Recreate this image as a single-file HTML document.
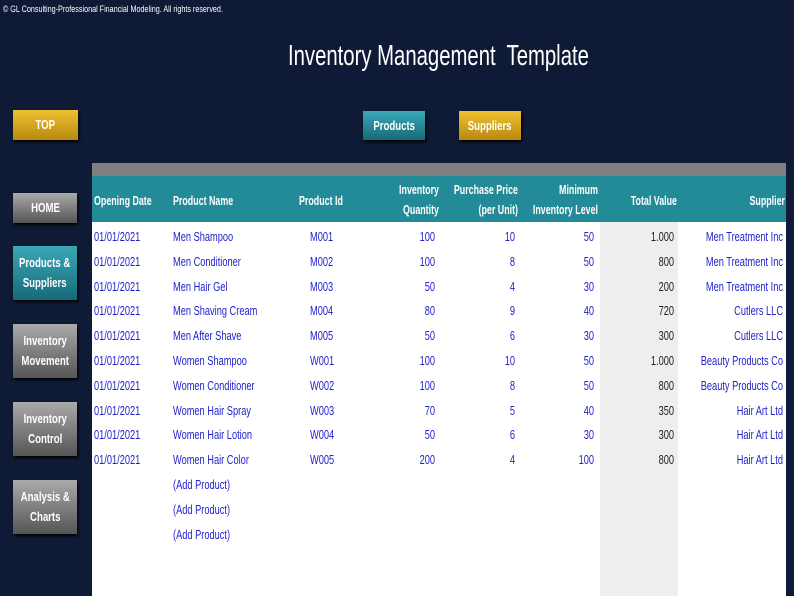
<!DOCTYPE html><html><head><style>
body{margin:0;width:794px;height:596px;overflow:hidden;background:#0f1b36;font-family:"Liberation Sans",sans-serif;position:relative}
.a{position:absolute}
.btn{position:absolute;color:#fff;font-size:13px;font-weight:bold;display:flex;align-items:center;justify-content:center;text-align:center;line-height:20px;box-shadow:1px 2px 3px #000}
.btn span{display:inline-block;transform:scaleX(.74);white-space:nowrap}
.gold{background:linear-gradient(#f0c030,#b88a10)}
.teal{background:linear-gradient(#3aa8b8,#176a78)}
.gray{background:linear-gradient(#aaa,#555)}
.t{position:absolute;font-size:12.5px;color:#2222cc;white-space:nowrap;transform:scaleX(.74);transform-origin:left}
.h{position:absolute;font-size:12.5px;color:#fff;font-weight:bold;line-height:20px;white-space:nowrap;transform:scaleX(.71);transform-origin:left}
.r{text-align:right;transform-origin:right}
</style></head><body>
<div class="a" style="left:3px;top:4px;font-size:9px;color:#fff;transform:scaleX(.8);transform-origin:left">© GL Consulting-Professional Financial Modeling. All rights reserved.</div>
<div class="a" style="left:288px;top:40px;font-size:29px;color:#fff;transform:scaleX(.7);transform-origin:left;white-space:nowrap">Inventory Management&nbsp; Template</div>
<div class="btn gold" style="left:13px;top:110px;width:65px;height:30px"><span>TOP</span></div>
<div class="btn teal" style="left:363px;top:111px;width:62px;height:29px"><span>Products</span></div>
<div class="btn gold" style="left:459px;top:111px;width:62px;height:29px"><span>Suppliers</span></div>
<div class="btn gray" style="left:13px;top:193px;width:64px;height:30px"><span>HOME</span></div>
<div class="btn teal" style="left:13px;top:246px;width:64px;height:54px"><span>Products &amp;<br>Suppliers</span></div>
<div class="btn gray" style="left:13px;top:324px;width:64px;height:54px"><span>Inventory<br>Movement</span></div>
<div class="btn gray" style="left:13px;top:402px;width:64px;height:54px"><span>Inventory<br>Control</span></div>
<div class="btn gray" style="left:13px;top:480px;width:64px;height:54px"><span>Analysis &amp;<br>Charts</span></div>
<div class="a" style="left:92px;top:163px;width:694px;height:433px;background:#fff"></div>
<div class="a" style="left:92px;top:163px;width:694px;height:13px;background:#7f7f7f"></div>
<div class="a" style="left:92px;top:176px;width:694px;height:46px;background:#238a98"></div>
<div class="a" style="left:600px;top:222px;width:78px;height:374px;background:#eeeeee"></div>
<div class="h" style="left:94px;top:191px">Opening Date</div>
<div class="h" style="left:173px;top:191px">Product Name</div>
<div class="h" style="left:299px;top:191px">Product Id</div>
<div class="h r" style="left:340px;top:180px;width:99px">Inventory<br>Quantity</div>
<div class="h r" style="left:400px;top:180px;width:118px">Purchase Price<br>(per Unit)</div>
<div class="h r" style="left:480px;top:180px;width:118px">Minimum<br>Inventory Level</div>
<div class="h r" style="left:580px;top:191px;width:97px">Total Value</div>
<div class="h r" style="left:680px;top:191px;width:105px">Supplier</div>
<div id="rows"></div>
<script>
var d=[["Men Shampoo","M001",100,10,50,"1.000","Men Treatment Inc"],["Men Conditioner","M002",100,8,50,"800","Men Treatment Inc"],["Men Hair Gel","M003",50,4,30,"200","Men Treatment Inc"],["Men Shaving Cream","M004",80,9,40,"720","Cutlers LLC"],["Men After Shave","M005",50,6,30,"300","Cutlers LLC"],["Women Shampoo","W001",100,10,50,"1.000","Beauty Products Co"],["Women Conditioner","W002",100,8,50,"800","Beauty Products Co"],["Women Hair Spray","W003",70,5,40,"350","Hair Art Ltd"],["Women Hair Lotion","W004",50,6,30,"300","Hair Art Ltd"],["Women Hair Color","W005",200,4,100,"800","Hair Art Ltd"]];
var h="";
d.forEach(function(r,i){var y=230+i*24.8;
h+='<div class="t" style="left:94px;top:'+y+'px">01/01/2021</div><div class="t" style="left:173px;top:'+y+'px">'+r[0]+'</div><div class="t" style="left:310px;top:'+y+'px">'+r[1]+'</div><div class="t r" style="left:380px;width:55px;top:'+y+'px">'+r[2]+'</div><div class="t r" style="left:440px;width:75px;top:'+y+'px">'+r[3]+'</div><div class="t r" style="left:520px;width:74px;top:'+y+'px">'+r[4]+'</div><div class="t r" style="left:600px;width:74px;top:'+y+'px;color:#222">'+r[5]+'</div><div class="t r" style="left:650px;width:133px;top:'+y+'px">'+r[6]+'</div>';});
for(var i=0;i<3;i++){h+='<div class="t" style="left:173px;top:'+(478+i*24.8)+'px">(Add Product)</div>';}
document.getElementById("rows").innerHTML=h;
</script>
</body></html>
